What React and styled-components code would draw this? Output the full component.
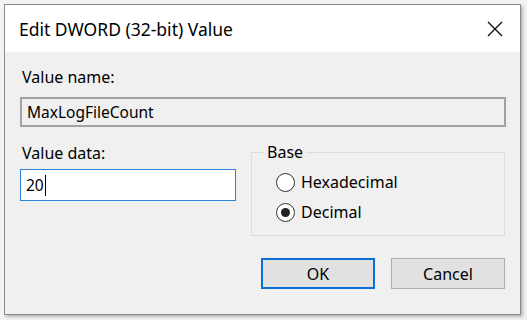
import React from 'react';
import styled, { createGlobalStyle } from 'styled-components';

const GlobalStyle = createGlobalStyle`
  html, body {
    margin: 0;
    padding: 0;
    background: #f3f3f3;
  }
  body {
    font-family: "Noto Sans", "Open Sans", sans-serif;
    color: #000;
  }
`;

const Screen = styled.div`
  width: 527px;
  height: 320px;
  padding: 4px 0 0 4px;
  box-sizing: border-box;
`;

const Window = styled.div`
  width: 517px;
  height: 311px;
  box-sizing: border-box;
  border: 1px solid #8a8a8a;
  box-shadow: 2px 2px 3px rgba(0, 0, 0, 0.25);
  display: flex;
  flex-direction: column;
  background: #f0f0f0;
`;

const TitleBar = styled.div`
  height: 47px;
  flex-shrink: 0;
  background: #ffffff;
  display: flex;
  align-items: center;
  justify-content: space-between;
  padding: 0 17px 0 14px;
  font-size: 17.5px;
`;

const Close = styled.svg`
  width: 16px;
  height: 16px;
`;

const Body = styled.div`
  flex: 1;
  padding: 15px 14px 0 15px;
  display: flex;
  flex-direction: column;
  font-size: 16px;
`;

const Label = styled.div`
  line-height: 20px;
  height: 20px;
  padding-left: 2px;
  margin-bottom: ${p => p.$gap}px;
`;

const TextBox = styled.div`
  box-sizing: border-box;
  height: ${p => p.$h}px;
  width: ${p => (p.$w ? `${p.$w}px` : 'auto')};
  border: ${p => (p.$focus ? '1.5px solid #2b83d8' : '2px solid #a2a2a2')};
  background: ${p => (p.$focus ? '#ffffff' : '#f0f0f0')};
  display: flex;
  align-items: center;
  padding-left: 5px;
  font-size: 15.5px;
`;

const Caret = styled.span`
  display: inline-block;
  width: 1.5px;
  height: 21px;
  background: #000;
  margin-left: 1px;
`;

const Row = styled.div`
  display: flex;
  justify-content: space-between;
  margin-top: 16px;
`;

const Column = styled.div`
  display: flex;
  flex-direction: column;
`;

const Group = styled.fieldset`
  box-sizing: border-box;
  width: 254px;
  height: 93px;
  margin: 0 1px 0 0;
  border: 1.5px solid #dcdcdc;
  padding: 11px 0 0 24px;
  display: flex;
  flex-direction: column;
  gap: 10px;
`;

const Legend = styled.legend`
  padding: 0 3px;
  margin-left: -12px;
  font-size: 16px;
  line-height: 18px;
`;

const Radio = styled.label`
  display: flex;
  align-items: center;
  gap: 6px;
  line-height: 20px;
`;

const Dot = styled.span`
  box-sizing: border-box;
  width: 19px;
  height: 19px;
  border-radius: 50%;
  border: 1.5px solid #333;
  background: #fff;
  display: flex;
  align-items: center;
  justify-content: center;

  &::after {
    content: '';
    width: 9px;
    height: 9px;
    border-radius: 50%;
    background: ${p => (p.$on ? '#222' : 'transparent')};
  }
`;

const Buttons = styled.div`
  display: flex;
  justify-content: flex-end;
  gap: 16px;
  margin-top: 22px;
  padding-right: 1px;
`;

const Button = styled.div`
  box-sizing: border-box;
  width: 114px;
  height: 31px;
  background: #e1e1e1;
  border: ${p => (p.$primary ? '2px solid #0a6fd6' : '1.5px solid #adadad')};
  display: flex;
  align-items: center;
  justify-content: center;
  font-size: 16px;
`;

export default function App() {
  return (
    <>
      <GlobalStyle />
      <Screen>
        <Window>
          <TitleBar>
            <span>Edit DWORD (32-bit) Value</span>
            <Close viewBox="0 0 16 16">
              <path d="M1 1L15 15M15 1L1 15" stroke="#111" strokeWidth="1.4" fill="none" />
            </Close>
          </TitleBar>
          <Body>
            <Label $gap={10}>Value name:</Label>
            <TextBox $h={30}>MaxLogFileCount</TextBox>
            <Row>
              <Column>
                <Label $gap={6}>Value data:</Label>
                <TextBox $h={32} $w={216} $focus>
                  20<Caret />
                </TextBox>
              </Column>
              <Group>
                <Legend>Base</Legend>
                <Radio>
                  <Dot />
                  Hexadecimal
                </Radio>
                <Radio>
                  <Dot $on />
                  Decimal
                </Radio>
              </Group>
            </Row>
            <Buttons>
              <Button $primary>OK</Button>
              <Button>Cancel</Button>
            </Buttons>
          </Body>
        </Window>
      </Screen>
    </>
  );
}
